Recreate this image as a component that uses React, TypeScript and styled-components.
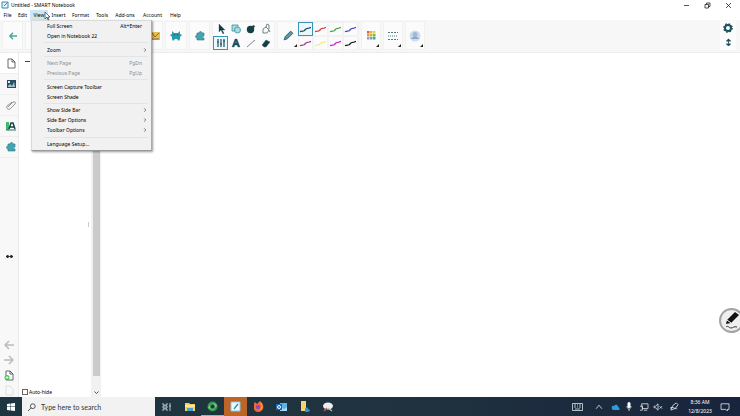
import React from 'react';
import styled, { createGlobalStyle } from 'styled-components';

const GlobalStyle = createGlobalStyle`
  * { box-sizing: border-box; }
  body { margin: 0; overflow: hidden; }
  body, button, input { font-family: "Noto Sans", "Open Sans", sans-serif; font-size: 5px; color: #000; }
  button { border: 0; padding: 0; background: none; }
  svg { display: block; flex: none; overflow: visible; }
`;

const Shell = styled.div`
  display: flex;
  flex-direction: column;
  height: 100vh;
  background: #fff;
  overflow: hidden;
`;
const TitleBar = styled.header`
  display: flex;
  align-items: center;
  height: 10px;
  padding: 0 2px 0 1px;
  gap: 2px;
`;
const Title = styled.span`
  flex: 1;
  line-height: 10px;
  white-space: nowrap;
`;
const WindowButton = styled.button`
  display: flex;
  align-items: center;
  justify-content: center;
  width: 19px;
  height: 10px;
`;
const MenuBar = styled.nav`
  display: flex;
  height: 10px;
`;
const MenuSlot = styled.div`
  position: relative;
  display: flex;
`;
const MenuTitle = styled.button<{ $open?: boolean; $width: number }>`
  width: ${p => p.$width}px;
  height: 10px;
  line-height: 10px;
  text-align: center;
  white-space: nowrap;
  background: ${p => (p.$open ? '#cce8f8' : 'transparent')};
`;
const DropDown = styled.div`
  position: absolute;
  z-index: 5;
  top: 10px;
  left: 1px;
  display: flex;
  flex-direction: column;
  width: 121px;
  min-height: 131px;
  padding-bottom: 1px;
  background: #f1f1f1;
  border: 1px solid #dadada;
  border-right-color: #aaa;
  border-bottom-color: #999;
  box-shadow: 1px 1px 2px #0006;
`;
const DropItem = styled.button<{ $sub?: boolean }>`
  display: flex;
  align-items: center;
  justify-content: space-between;
  height: 10px;
  padding: 0 ${p => (p.$sub ? 4 : 9)}px 0 15px;
  line-height: 10px;
  white-space: nowrap;
  &:disabled { color: #8c8c8c; }
`;
const ItemHint = styled.span`
  display: flex;
  justify-content: flex-end;
`;
const Separator = styled.div`
  flex: 1;
  display: flex;
  align-items: center;
  &::after { content: ''; flex: 1; height: 1px; margin: 0 3px 0 12px; background: #e4e4e4; }
`;
const Cursor = styled.span`
  position: absolute;
  z-index: 6;
  left: 14px;
  top: 2px;
`;

const Toolbar = styled.div`
  display: flex;
  height: 33px;
  padding: 1px 4px 2px 2px;
  gap: 2px;
  background: #f7f7f7;
  border-bottom: 1px solid #ececec;
`;
const Group = styled.div<{ $width: number }>`
  display: flex;
  width: ${p => p.$width}px;
  background: #fbfbfb;
  border: 1px solid #f0f1f1;
`;
const ToolGrid = styled.div`
  display: grid;
  grid-template-columns: repeat(4, 15px);
  grid-template-rows: 14px 14px;
`;
const ToolButton = styled.button<{ $active?: boolean; $align?: string }>`
  position: relative;
  display: flex;
  flex: 1;
  align-items: center;
  justify-content: ${p => p.$align || 'center'};
  border: 1px solid ${p => (p.$active ? '#3b94b8' : 'transparent')};
  background: ${p => (p.$active ? '#edf6fa' : 'transparent')};
`;
const PenButton = styled(ToolButton)`
  border-color: ${p => (p.$active ? '#3b94b8' : '#f2f2f2')};
`;
const Corner = styled.span`
  position: absolute;
  right: 0;
  bottom: 1px;
  border-left: 3px solid transparent;
  border-bottom: 3px solid #222;
`;
const ToolbarSpace = styled.div`
  flex: 1;
`;
const SettingsStack = styled.div`
  display: flex;
  flex-direction: column;
  width: 16px;
  background: #fcfcfc;
`;

const Body = styled.main`
  position: relative;
  display: flex;
  flex: 1;
  min-height: 0;
`;
const SideTabs = styled.aside`
  display: flex;
  flex-direction: column;
  width: 19px;
  background: #f8f8f8;
  border-right: 1px solid #e9e9e9;
`;
const SideTab = styled.button<{ $active?: boolean }>`
  display: flex;
  align-items: center;
  justify-content: center;
  height: 21px;
  padding-left: 3px;
  background: ${p => (p.$active ? '#fff' : 'transparent')};
  border-bottom: 1px solid #eee;
`;
const SideAction = styled.button`
  display: flex;
  align-items: center;
  justify-content: center;
  height: 15px;
`;
const SideGap = styled.div<{ $grow: number }>`
  flex: ${p => p.$grow};
`;
const PagePanel = styled.section`
  display: flex;
  flex-direction: column;
  justify-content: space-between;
  width: 72px;
  padding: 8px 2px 1px 3px;
`;
const Dash = styled.span`
  width: 5px;
  height: 1px;
  margin-left: 3px;
  background: #444;
`;
const AutoHide = styled.label`
  display: flex;
  align-items: center;
  gap: 1px;
  height: 8px;
  line-height: 8px;
`;
const Tick = styled.input`
  appearance: none;
  width: 6px;
  height: 6px;
  margin: 0;
  border: 1px solid #666;
  background: #fff;
`;
const Splitter = styled.div`
  position: absolute;
  left: 88px;
  top: 49%;
  width: 1px;
  height: 5px;
  background: #ccc;
`;
const ScrollTrack = styled.div`
  display: flex;
  flex-direction: column;
  width: 10px;
  padding: 0 1px 0 2px;
  background: #f1f1f1;
`;
const ScrollThumb = styled.div`
  flex: 1;
  background: #cbcbcb;
`;
const ScrollButton = styled.button`
  display: flex;
  align-items: flex-end;
  justify-content: center;
  height: 21px;
  padding-bottom: 2px;
`;
const Canvas = styled.section`
  flex: 1;
  background: #fff;
`;
const InkButton = styled.button`
  position: absolute;
  right: -4px;
  top: 255px;
  display: flex;
  align-items: center;
  justify-content: center;
  width: 25px;
  height: 25px;
  border: 2px solid #a3a3a3;
  border-radius: 50%;
  background: #efefef;
`;

const TaskBar = styled.footer`
  display: flex;
  height: 19px;
  background: linear-gradient(90deg, #1d3640, #20323f 55%, #18243d);
`;
const TaskButton = styled.button<{ $width?: number; $mode?: 'active' | 'running' }>`
  display: flex;
  align-items: center;
  justify-content: center;
  width: ${p => p.$width || 23}px;
  background: ${p => (p.$mode === 'active' ? '#bd6526' : 'transparent')};
  border-bottom: ${p => (p.$mode === 'running' ? '1px solid #76b9ed' : '0')};
`;
const Search = styled.label`
  display: flex;
  align-items: center;
  width: 133px;
  padding-left: 6px;
  gap: 5px;
  background: #f2f2f2;
`;
const SearchInput = styled.input`
  width: 100px;
  height: 15px;
  padding: 0;
  border: 0;
  outline: 0;
  background: transparent;
  font-family: Lato, sans-serif;
  font-size: 7px;
  &::placeholder { color: #333; opacity: 1; }
`;
const TaskSpace = styled.div`
  flex: 1;
`;
const Clock = styled.button`
  width: 34px;
  color: #fff;
  line-height: 9px;
  text-align: center;
  white-space: nowrap;
`;

const teal = '#1b505c';
const Line = ({ d, c = teal, w = 1, s = 10, fill = 'none' }: { d: string; c?: string; w?: number; s?: number; fill?: string }) => (
  <svg width={s} height={s} viewBox="0 0 10 10" fill={fill} stroke={c} strokeWidth={w} strokeLinejoin="round"><path d={d} /></svg>
);
const Chevron = () => <Line s={4} d="M3 1l4 4-4 4" c="#555" w={2} />;
const Puzzle = () => (
  <svg width="10" height="10" viewBox="0 0 10 10" fill="#42a5b1" stroke="#287987" strokeWidth=".6"><path d="M2 9V7C0 7 0 4 2 4V2h2c0-2 3-2 3 0h2v3C7 5 7 7 9 7v2z" /></svg>
);
const PenStroke = ({ c }: { c: string }) => <Line s={11} c={c} w={1.2} d="M0 7c2-1 3 0 4-1s1-2 3-2 2-1 3-1" />;

const tools = [
  ['Select', <Line d="M3 0v8l2-2 2 4 1-1-2-3h3z" fill="#173941" w={0.3} />],
  ['Shapes', <svg width="10" height="10" fill="#a8dbe2" stroke="#3993a0" strokeWidth=".8"><path d="M1 1h6v6H1z" /><circle cx="6.500" cy="6" r="3" /></svg>],
  ['Polygons', <svg width="10" height="10" fill="#173f43"><circle cx="4.500" cy="5.500" r="3.700" /><path d="M7 1l2 1-1 2-2-1z" /></svg>],
  ['Fill', <Line d="M2 5l3-2 3 3-2 3H2zM5 3l1-3 2 1v4M8 6l1 2" c="#526b70" w={0.8} />],
  ['Customize', <Line d="M2 1v8M5 1v8M8 1v8M1 4h2M4 6h2M7 3h2" w={1.2} />],
  ['Text', <Line d="M1 9l3-8h2l3 8H7L6 7H4L3 9zM4.500 5h1L5 3z" fill={teal} w={0.3} />],
  ['Lines', <Line d="M1 9l8-7" c="#526b70" w={0.8} />],
  ['Eraser', <Line d="M1 7l4-5 4 2-4 5H3z" fill="#173f43" w={0.4} />],
] as const;
const pens = ['#174f58', '#d83b45', '#48a64c', '#4648cf', '#a2428d', '#f4ef72', '#d51ec9', '#202020'];

const menuBefore: [string, number][] = [['File', 15], ['Edit', 15]];
const menuAfter: [string, number][] = [['Insert', 21], ['Format', 23], ['Tools', 20], ['Add-ons', 26], ['Account', 29], ['Help', 17]];
type Entry = { label: string; hint?: string; sub?: boolean; off?: boolean } | null;
const entries: Entry[] = [
  { label: 'Full Screen', hint: 'Alt+Enter' }, { label: 'Open in Notebook 22' }, null,
  { label: 'Zoom', sub: true }, null,
  { label: 'Next Page', hint: 'PgDn', off: true }, { label: 'Previous Page', hint: 'PgUp', off: true }, null,
  { label: 'Screen Capture Toolbar' }, { label: 'Screen Shade' }, null,
  { label: 'Show Side Bar', sub: true }, { label: 'Side Bar Options', sub: true }, { label: 'Toolbar Options', sub: true }, null,
  { label: 'Language Setup...' },
];

const PageIcon = ({ add }: { add?: boolean }) => (
  <svg width="10" height="10" fill="#fff" stroke="#444" strokeWidth=".8"><path d="M2 1h4l3 3v6H2zM6 1v3h3" />{add && <><circle cx="3" cy="7.500" r="2.500" fill="#42c853" stroke="none" /><path d="M3 6v3M1.500 7.500h3" stroke="#fff" /></>}</svg>
);

const TitleRow = () => (
  <TitleBar>
    <svg width="8" height="8"><path d="M1 1h6v6H1z" fill="#e8f8ff" stroke="#2a8bb2" /><path d="M3 5l3-3" stroke="#2a8bb2" /></svg>
    <Title>Untitled - SMART Notebook</Title>
    <WindowButton aria-label="Minimize"><Line s={5} d="M0 5h10" c="#222" w={1.5} /></WindowButton>
    <WindowButton aria-label="Restore"><Line s={5} d="M0 3h7v7H0zM3 3V0h7v7H7" c="#222" w={1.6} /></WindowButton>
    <WindowButton aria-label="Close"><Line s={5} d="M0 0l10 10M10 0L0 10" c="#222" w={1.6} /></WindowButton>
  </TitleBar>
);

const Menus = () => (
  <MenuBar>
    {menuBefore.map(([t, w]) => <MenuTitle key={t} $width={w}>{t}</MenuTitle>)}
    <MenuSlot>
      <MenuTitle $width={18} $open>View</MenuTitle>
      <Cursor><svg width="6" height="9" fill="#fff" stroke="#333" strokeWidth=".7"><path d="M1 0v7l2-2 1 3 1-.5L4 5h2z" /></svg></Cursor>
      <DropDown>
        {entries.map((e, i) => e ? (
          <DropItem key={e.label} disabled={e.off} $sub={e.sub}>
            <span>{e.label}</span><ItemHint>{e.sub ? <Chevron /> : e.hint}</ItemHint>
          </DropItem>
        ) : <Separator key={i} />)}
      </DropDown>
    </MenuSlot>
    {menuAfter.map(([t, w]) => <MenuTitle key={t} $width={w}>{t}</MenuTitle>)}
  </MenuBar>
);

const Tools = () => (
  <Toolbar>
    <Group $width={21}><ToolButton aria-label="Back"><Line d="M10 5H2M5 1L1 5l4 4" c="#4ca798" w={1.8} s={8} /></ToolButton></Group>
    <Group $width={138}><ToolButton $align="flex-end" aria-label="Response"><svg width="10" height="10"><path d="M0 1h9v8H0z" fill="#e3bd58" /><path d="M1 2l3 4 4-4M1 8h7" fill="none" stroke="#8c6e2a" /></svg></ToolButton></Group>
    <Group $width={22}><ToolButton aria-label="Monster"><svg width="12" height="12" fill="#259bac"><path d="M2 1l2 2h4l2-2v3l2 1-2 2v2l-1 2-2-2H5l-2 2-1-2V7L0 5l2-1z" /><path d="M4 5h1M7 5h1" stroke="#164e5c" /></svg></ToolButton></Group>
    <Group $width={21}><ToolButton aria-label="Add-on"><Puzzle /></ToolButton></Group>
    <Group $width={63}>
      <ToolGrid>{tools.map(([t, icon], i) => <ToolButton key={t} aria-label={t} $active={i === 4}>{icon}</ToolButton>)}</ToolGrid>
    </Group>
    <Group $width={82}>
      <ToolButton aria-label="Pens"><Line s={11} d="M1 9l1-3 5-5 2 2-5 5z" fill="#5e98a0" w={0.7} /><Corner /></ToolButton>
      <ToolGrid>{pens.map((c, i) => <PenButton key={c} aria-label={`Pen ${i + 1}`} $active={i === 0}><PenStroke c={c} /></PenButton>)}</ToolGrid>
    </Group>
    <Group $width={20}><ToolButton aria-label="Color"><svg width="9" height="9">{['#db5d55', '#efad42', '#e6d246', '#e59b3d', '#a8c64c', '#67b85f', '#b48fc8', '#61a9d7', '#45a4a4'].map((c, i) => <rect key={c} x={(i % 3) * 3} y={Math.floor(i / 3) * 3} width="2.500" height="2.500" fill={c} />)}</svg><Corner /></ToolButton></Group>
    <Group $width={20}><ToolButton aria-label="Line style"><svg width="10" height="10" stroke="#58777c"><path d="M0 1.500h10M0 8.500h10" strokeDasharray="2 1" /><path d="M0 5h10" strokeDasharray="1 1" /></svg><Corner /></ToolButton></Group>
    <Group $width={20}><ToolButton aria-label="Transparency"><svg width="12" height="12"><circle cx="6" cy="6" r="5.500" fill="#d0dcea" /><circle cx="6" cy="4.500" r="2.500" fill="#9dbad8" /><path d="M2 9c1-3 7-3 8 0z" fill="#87a9cf" /></svg><Corner /></ToolButton></Group>
    <ToolbarSpace />
    <SettingsStack>
      <ToolButton aria-label="Settings"><svg width="10" height="10" fill="none" stroke={teal}><circle cx="5" cy="5" r="3" strokeWidth="2" /><circle cx="5" cy="5" r="4.200" strokeWidth="1.300" strokeDasharray="1.650 1.650" /></svg></ToolButton>
      <ToolButton aria-label="Move toolbar"><Line s={7} d="M5 0v10M2 3l3-3 3 3zM2 7l3 3 3-3z" w={1.2} fill={teal} /></ToolButton>
    </SettingsStack>
  </Toolbar>
);

const Sidebar = () => (
  <SideTabs>
    <SideTab $active aria-label="Pages"><PageIcon /></SideTab>
    <SideTab aria-label="Gallery"><svg width="10" height="10"><path d="M1 1h9v8H1z" fill="#294d60" /><path d="M2 7l2-2 2 2 2-4 1 5H2z" fill="#9ec4d3" /><path d="M2 2h2v2H2z" fill="#dceaf0" /></svg></SideTab>
    <SideTab aria-label="Attachments"><Line d="M2 7l5-5c2-1 3 1 2 2L4 9C2 10 0 8 1 6l5-4" c="#777" w={0.8} /></SideTab>
    <SideTab aria-label="Properties"><svg width="10" height="10"><path d="M0 1h3v8H0z" fill="#43b96a" /><path d="M3 8l2-6h2l2 6M4 6h4" fill="none" stroke="#173f43" strokeWidth="1.400" /><path d="M0 9h10" stroke="#28706a" /></svg></SideTab>
    <SideTab aria-label="Add-ons"><Puzzle /></SideTab>
    <SideGap $grow={10} />
    <SideAction aria-label="Resize side bar"><Line s={7} d="M0 5h10M3 3L0 5l3 2zM7 3l3 2-3 2z" c="#222" w={1.2} fill="#222" /></SideAction>
    <SideGap $grow={8} />
    <SideAction aria-label="Previous page"><Line d="M10 5H1M5 1L1 5l4 4" c="#bbb" w={1.5} /></SideAction>
    <SideAction aria-label="Next page"><Line d="M0 5h9M5 1l4 4-4 4" c="#bbb" w={1.5} /></SideAction>
    <SideAction aria-label="Add page"><PageIcon add /></SideAction>
    <SideAction aria-label="Delete page" disabled><Line d="M2 1h4l3 3v6H2z" c="#dfe3df" /></SideAction>
  </SideTabs>
);

const Tasks = () => (
  <TaskBar>
    <TaskButton $width={22} aria-label="Start"><svg width="8" height="8" fill="#fff"><path d="M0 1l3.500-.5v3H0zM4 .5L8 0v3.500H4zM0 4h3.500v3.500L0 7zM4 4h4v4l-4-.5z" /></svg></TaskButton>
    <Search><Line s={8} d="M9 4a3 3 0 1 1-6 0a3 3 0 0 1 6 0M4 6L0 10" c="#444" w={1.1} /><SearchInput aria-label="Search" placeholder="Type here to search" /></Search>
    <TaskButton aria-label="Task view"><svg width="9" height="8" fill="none" stroke="#d9e4e8" strokeWidth=".8"><path d="M1 0v2h4V0M1 8V6h4v2M1 3h4v2H1zM8 0v8M7 3h2" /></svg></TaskButton>
    <TaskButton aria-label="File Explorer"><svg width="10" height="9"><path d="M0 1h4l1 1h5v7H0z" fill="#f3d15d" /><path d="M2 9V6h6v3z" fill="#4aa2d3" /><path d="M0 3h10v2H0z" fill="#ffe89b" /></svg></TaskButton>
    <TaskButton $mode="running" aria-label="Browser"><svg width="11" height="11"><circle cx="5.500" cy="5.500" r="5" fill="#2c984c" /><path d="M1 7c2-6 8-6 9-2L6 9z" fill="#81c879" /><circle cx="5.500" cy="5.500" r="2.200" fill="#173f43" /></svg></TaskButton>
    <TaskButton $mode="active" aria-label="SMART Notebook"><svg width="11" height="11"><path d="M1 1h9v9H1z" fill="#ecfaff" stroke="#8bc9df" /><path d="M4 8l4-5" stroke="#338da9" strokeWidth="1.300" /></svg></TaskButton>
    <TaskButton aria-label="Firefox"><svg width="11" height="11"><path d="M1 3l1-2 2 2 3-3c3 2 4 5 3 8-2 4-8 4-9 0z" fill="#f36b30" /><path d="M7 1c3 3 3 6 0 8l2-4z" fill="#ffd54a" /><circle cx="5" cy="6" r="2.200" fill="#8f48bd" /></svg></TaskButton>
    <TaskButton aria-label="Outlook"><svg width="11" height="10"><path d="M4 1h7v8H4z" fill="#58b4ea" /><path d="M4 5l4 2 3-2v4H4z" fill="#a7d9f4" /><path d="M0 2h6v6H0z" fill="#176bb7" /><circle cx="3" cy="5" r="1.500" fill="none" stroke="#fff" /></svg></TaskButton>
    <TaskButton aria-label="Cloud files"><svg width="10" height="11"><path d="M1 0h5v10H1z" fill="#f4d567" /><path d="M5 9c0-3 3-3 3-1 3 0 2 3 0 3H5z" fill="#2996dc" /></svg></TaskButton>
    <TaskButton aria-label="Snipping Tool"><svg width="12" height="10"><ellipse cx="6" cy="4" rx="5" ry="3.500" fill="#eee" /><path d="M2 9l3-3" stroke="#b95d68" strokeWidth="1.400" /><path d="M6 6l4 3" stroke="#b9c2c8" strokeWidth="1.200" /></svg></TaskButton>
    <TaskSpace />
    <TaskButton aria-label="Keyboard"><svg width="11" height="8" fill="none" stroke="#dce2ea" strokeWidth=".8"><path d="M.5.500h10v7H.5zM2 2h2M5 2h1M7 2h2M2 4h2M5 4h1M7 4h2M3 6h5" /></svg></TaskButton>
    <TaskButton $width={20} aria-label="Hidden icons"><Line s={6} d="M0 8l5-6 5 6" c="#eee" w={1.300} /></TaskButton>
    <TaskButton $width={12} aria-label="OneDrive"><svg width="9" height="8"><path d="M1 6c-1-3 1-4 2-3 2-3 5 0 4 1 3 1 1 4 0 3H2z" fill="#2b9be0" /></svg></TaskButton>
    <TaskButton $width={16} aria-label="Microphone"><svg width="6" height="9"><rect x="1.500" width="3" height="6" rx="1.500" fill="#fff" /><path d="M1 4c0 4 4 4 4 0M3 7v2" fill="none" stroke="#fff" strokeWidth=".7" /></svg></TaskButton>
    <TaskButton $width={14} aria-label="Network"><Line s={8} d="M2 1h8v6H3zM0 4h3v5H0M5 9h4" c="#e3e8ee" /></TaskButton>
    <TaskButton $width={14} aria-label="Volume"><Line s={8} d="M0 4h2l3-3v8L2 6H0zM7 4l3 3M10 4L7 7" c="#e3e8ee" /></TaskButton>
    <TaskButton $width={18} aria-label="Pen"><Line s={9} d="M1 9l2-5 4-3 2 2-3 4zM0 7c3-3 6 2 8 0" c="#e3e8ee" w={0.9} /></TaskButton>
    <Clock>8:36 AM<br />12/8/2023</Clock>
    <TaskButton $width={16} aria-label="Notifications"><Line s={8} d="M0 1h10v7H8v2L6 8H0z" c="#e3e8ee" /></TaskButton>
    <TaskButton $width={7} aria-label="Show desktop" />
  </TaskBar>
);

export default function App() {
  return (
    <Shell>
      <GlobalStyle />
      <TitleRow />
      <Menus />
      <Tools />
      <Body>
        <Sidebar />
        <PagePanel><Dash /><AutoHide><Tick type="checkbox" />Auto-hide</AutoHide></PagePanel>
        <ScrollTrack><ScrollThumb /><ScrollButton aria-label="Scroll down"><Line s={5} d="M1 3l4 4 4-4" c="#444" w={1.800} /></ScrollButton></ScrollTrack>
        <Canvas />
        <Splitter />
        <InkButton aria-label="Ink tools"><svg width="16" height="18"><path d="M2 12l1-4 8-8 4 3-8 8z" fill="#111" /><path d="M3 8l4 3" stroke="#fff" /><path d="M2 15c2-2 3 1 5 1s3-2 6-1" fill="none" stroke="#333" /></svg></InkButton>
      </Body>
      <Tasks />
    </Shell>
  );
}
